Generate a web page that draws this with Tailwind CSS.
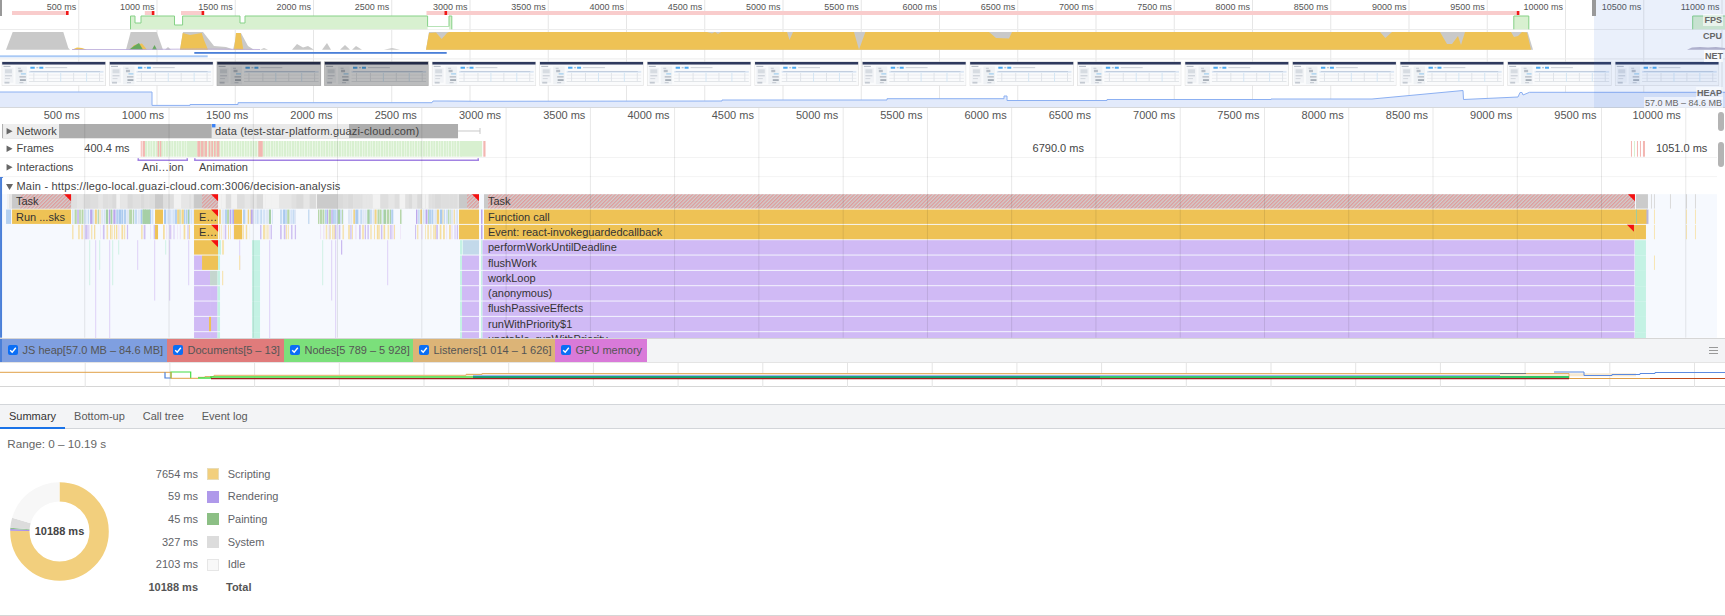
<!DOCTYPE html>
<html lang="en">
<head>
<meta charset="UTF-8">
<title>Performance</title>
<script src="https://cdn.jsdelivr.net/npm/@tailwindcss/browser@4"></script>
</head>
<body class="bg-white">
<div class="w-[1725px] h-[616px] overflow-hidden flex flex-col bg-white text-[11px] text-[#444] font-['Liberation_Sans',Arial,sans-serif]">

    <!-- overview -->
    <div class="relative h-[108px] shrink-0 overflow-hidden">
        <svg id="overview" class="absolute left-0 top-0" width="1725" height="108" viewBox="0 0 1725 108">
            <defs>
                <filter id="soft"><feGaussianBlur stdDeviation="0.35"/></filter>
                <symbol id="thumb" viewBox="0 0 105 24.6" width="104.5" height="24.6">
                    <rect x="0" y="0" width="105" height="24.6" fill="#dedede"/>
                    <rect x="0.7" y="0.6" width="103.6" height="23.4" fill="#fafbfc"/>
                    <rect x="0.7" y="0.6" width="103.6" height="2.6" fill="#2f3a5e"/>
                    <g filter="url(#soft)">
                        <rect x="2" y="4.5" width="7" height="1.2" fill="#b9bfc9"/>
                        <rect x="2" y="6.5" width="10" height="15" fill="#f1f3f6"/>
                        <rect x="3.5" y="8" width="7" height="4" fill="#d7dce2"/>
                        <rect x="3.5" y="14" width="7" height="1" fill="#c3c9d1"/>
                        <rect x="3.5" y="17" width="5" height="0.8" fill="#ccd1d8"/>
                        <rect x="3" y="20.5" width="5" height="1.8" fill="#c3c9d1"/>
                        <rect x="14" y="5" width="11.5" height="18" fill="#eff2f5"/>
                        <rect x="16.5" y="6.5" width="3" height="0.8" fill="#b9bfc9"/>
                        <rect x="17" y="8.5" width="4" height="2.4" fill="#b7bec7"/>
                        <rect x="19.5" y="12" width="5" height="1.2" fill="#9fcdee"/>
                        <rect x="18" y="15" width="6.5" height="1.2" fill="#aeb5be"/>
                        <rect x="18.5" y="18" width="6" height="1.6" fill="#9ca4ae"/>
                        <rect x="18" y="21" width="4" height="0.9" fill="#b9bfc9"/>
                        <rect x="29" y="5.4" width="4.4" height="2" fill="#4ba8f0"/>
                        <rect x="35" y="5.6" width="2" height="1.4" fill="#b9c4d2"/>
                        <rect x="38" y="5.4" width="4" height="2" fill="#4ba8f0"/>
                        <rect x="44" y="5.9" width="22" height="0.9" fill="#c6cbd2"/>
                        <rect x="27.5" y="9.6" width="75" height="1.8" fill="#dbe6f4"/>
                        <rect x="29" y="10" width="70" height="0.7" fill="#b7c4d6"/>
                        <rect x="27.5" y="13.4" width="75" height="0.7" fill="#e3e6ea"/>
                        <rect x="27.5" y="16.6" width="75" height="0.7" fill="#e3e6ea"/>
                        <rect x="27.5" y="19.8" width="75" height="0.7" fill="#d7dbe0"/>
                        <rect x="32" y="11.5" width="1" height="9" fill="#e0e4e9"/>
                        <rect x="46" y="11.5" width="1" height="9" fill="#e0e4e9"/>
                        <rect x="59" y="11.5" width="1" height="9" fill="#d4e6f4"/>
                        <rect x="72" y="11.5" width="1" height="9" fill="#e0e4e9"/>
                        <rect x="85" y="11.5" width="1" height="9" fill="#d4e6f4"/>
                        <rect x="98" y="11.5" width="1" height="9" fill="#e0e4e9"/>
                    </g>
                </symbol>
            </defs>
        </svg>
        <div class="relative flex h-[15px] items-center text-[9px] text-[#555]" id="overviewTicks"></div>
        <div class="absolute left-[1594.4px] top-0 w-[131px] h-[108px] bg-[#2f6fd8]/10"></div>
        <div class="absolute left-0 top-0 w-[2px] h-[16px] bg-[#999]"></div>
        <div class="absolute left-[1592px] top-0 w-[4px] h-[16px] bg-[#999]"></div>
        <span class="absolute right-[2px] top-[14px] px-[1px] text-[9px] leading-[12px] font-bold text-[#666] bg-white/60">FPS</span>
        <span class="absolute right-[2px] top-[30px] px-[1px] text-[9px] leading-[12px] font-bold text-[#666]">CPU</span>
        <span class="absolute right-[2px] top-[50px] pl-[1px] text-[9px] leading-[12px] font-bold text-[#666] bg-white/70">NET</span>
        <span class="absolute right-[2px] top-[87px] px-[1px] text-[9px] leading-[12px] font-bold text-[#666] bg-white/50">HEAP</span>
        <span class="absolute right-[2px] top-[97px] px-[1px] text-[9px] leading-[12px] text-[#666] bg-white/60">57.0 MB – 84.6 MB</span>
    </div>

    <!-- tracks + flame chart -->
    <div class="relative h-[229.7px] shrink-0 overflow-hidden">
        <svg id="tracks" class="absolute left-0 top-0" width="1725" height="229.7" viewBox="0 108 1725 229.7">
            <defs>
                <pattern id="hatch" width="2.6" height="2.6" patternUnits="userSpaceOnUse" patternTransform="rotate(45)">
                    <rect width="2.6" height="2.6" fill="#cfcfcf"/>
                    <rect width="1.3" height="2.6" fill="#e09a9a"/>
                </pattern>
            </defs>
        </svg>
        <div class="relative h-[13.5px] flex items-center text-[#555]" id="axisTicks"></div>

        <div class="relative mt-[2.5px] h-[14.5px] flex items-center">
            <span class="w-[215px] pl-[16.5px]">Network</span>
            <span class="tracking-[0.15px]">data (test-star-platform.guazi-cloud.com)</span>
        </div>
        <div class="relative h-[18.8px] flex items-center pt-[1.5px]">
            <span class="w-[84.3px] pl-[16.5px]">Frames</span>
            <span class="w-[948.3px]">400.4 ms</span>
            <span class="w-[623.4px]">6790.0 ms</span>
            <span>1051.0 ms</span>
        </div>
        <div class="relative h-[19.4px] flex items-center">
            <span class="w-[142px] pl-[16.5px]">Interactions</span>
            <span class="w-[57px]">Ani…ion</span>
            <span>Animation</span>
        </div>
        <div class="relative h-[17.5px] flex items-center pl-[16.5px] pt-[2.5px] tracking-[0.2px]">Main - https://lego-local.guazi-cloud.com:3006/decision-analysis</div>

        <div class="relative text-[#333] leading-[15.33px]">
            <div class="h-[15.33px] flex"><span class="w-[16px]"></span><span class="w-[183px]">Task</span><span class="w-[289px]"></span><span>Task</span></div>
            <div class="h-[15.33px] flex"><span class="w-[16px]"></span><span class="w-[183px]">Run ...sks</span><span class="w-[289px]">E…</span><span>Function call</span></div>
            <div class="h-[15.33px] flex"><span class="w-[199px]"></span><span class="w-[289px]">E…</span><span>Event: react-invokeguardedcallback</span></div>
            <div class="h-[15.33px] pl-[488px]">performWorkUntilDeadline</div>
            <div class="h-[15.33px] pl-[488px]">flushWork</div>
            <div class="h-[15.33px] pl-[488px]">workLoop</div>
            <div class="h-[15.33px] pl-[488px]">(anonymous)</div>
            <div class="h-[15.33px] pl-[488px]">flushPassiveEffects</div>
            <div class="h-[15.33px] pl-[488px]">runWithPriority$1</div>
            <div class="h-[15.33px] pl-[488px]">unstable_runWithPriority</div>
        </div>

        <div class="absolute right-[1px] top-[3.7px] w-[6.4px] h-[19px] rounded-[3px] bg-[#b4b4b4]"></div>
        <div class="absolute right-[1px] top-[34px] w-[6.4px] h-[24.7px] rounded-[3px] bg-[#b4b4b4]"></div>
    </div>

    <!-- memory counters -->
    <div class="h-[24px] shrink-0 flex items-stretch bg-[#f3f4f6] border-t border-[#d6d6d6] text-[#555] text-[11px]">
        <div class="w-[2px] bg-[#4a7fd8]"></div>
        <div class="w-[165px] bg-[#7f9fe0] flex items-center gap-[5px] pl-[5.5px]">
            <span class="w-[10px] h-[10px] rounded-[2px] bg-[#0b6ef5] flex items-center justify-center"><svg width="8" height="8" viewBox="0 0 8 8"><path d="M1.2 4.2 L3.2 6.2 L6.8 1.8" fill="none" stroke="#fff" stroke-width="1.4"/></svg></span>
            <span>JS heap[57.0 MB – 84.6 MB]</span>
        </div>
        <div class="w-[117px] bg-[#e07b7b] flex items-center gap-[5px] pl-[5.5px]">
            <span class="w-[10px] h-[10px] rounded-[2px] bg-[#0b6ef5] flex items-center justify-center"><svg width="8" height="8" viewBox="0 0 8 8"><path d="M1.2 4.2 L3.2 6.2 L6.8 1.8" fill="none" stroke="#fff" stroke-width="1.4"/></svg></span>
            <span>Documents[5 – 13]</span>
        </div>
        <div class="w-[129px] bg-[#7be07b] flex items-center gap-[5px] pl-[5.5px]">
            <span class="w-[10px] h-[10px] rounded-[2px] bg-[#0b6ef5] flex items-center justify-center"><svg width="8" height="8" viewBox="0 0 8 8"><path d="M1.2 4.2 L3.2 6.2 L6.8 1.8" fill="none" stroke="#fff" stroke-width="1.4"/></svg></span>
            <span>Nodes[5 789 – 5 928]</span>
        </div>
        <div class="w-[142px] bg-[#dcb477] flex items-center gap-[5px] pl-[5.5px]">
            <span class="w-[10px] h-[10px] rounded-[2px] bg-[#0b6ef5] flex items-center justify-center"><svg width="8" height="8" viewBox="0 0 8 8"><path d="M1.2 4.2 L3.2 6.2 L6.8 1.8" fill="none" stroke="#fff" stroke-width="1.4"/></svg></span>
            <span>Listeners[1 014 – 1 626]</span>
        </div>
        <div class="w-[92px] bg-[#d97ad9] flex items-center gap-[5px] pl-[5.5px]">
            <span class="w-[10px] h-[10px] rounded-[2px] bg-[#0b6ef5] flex items-center justify-center"><svg width="8" height="8" viewBox="0 0 8 8"><path d="M1.2 4.2 L3.2 6.2 L6.8 1.8" fill="none" stroke="#fff" stroke-width="1.4"/></svg></span>
            <span>GPU memory</span>
        </div>
        <div class="flex-1 flex items-center justify-end pr-[7px]">
            <div class="flex flex-col gap-[2px]"><div class="w-[9px] h-[1px] bg-[#999]"></div><div class="w-[9px] h-[1px] bg-[#999]"></div><div class="w-[9px] h-[1px] bg-[#999]"></div></div>
        </div>
    </div>

    <!-- memory graph -->
    <div class="h-[25px] shrink-0 border-y border-[#d6d6d6] border-t-[#e4e4e4] box-border">
        <svg id="memory" class="block" width="1725" height="24" viewBox="0 362 1725 24"></svg>
    </div>
    <div class="h-[17.5px] shrink-0"></div>

    <!-- details -->
    <div class="h-[25px] shrink-0 flex items-stretch bg-[#f3f4f6] border-y border-[#d3d6da] text-[#5a5a5a]">
        <div class="px-[9px] flex items-center text-[#333] border-b-2 border-[#1a73e8] -mb-[1px]">Summary</div>
        <div class="px-[9px] flex items-center">Bottom-up</div>
        <div class="px-[9px] flex items-center">Call tree</div>
        <div class="px-[9px] flex items-center">Event log</div>
    </div>
    <div class="flex-1 relative border-b border-[#d6d6d6] text-[#5f6368]">
        <div class="h-[33.5px] flex items-center pl-[7.3px] pb-[4px] text-[11.7px] text-[#666]">Range: 0 – 10.19 s</div>
        <div class="flex">
            <div class="w-[118px] pl-[9.7px] pt-[19.4px]">
                <svg width="99" height="99" viewBox="0 0 99 99">
                    <g id="donut" fill="none" stroke-width="19.3" transform="rotate(-90 49.5 49.5)"></g>
                    <text x="49.5" y="53.3" text-anchor="middle" font-size="11" font-weight="700" fill="#444">10188 ms</text>
                </svg>
            </div>
            <div class="flex flex-col">
                <div class="h-[22.67px] flex items-center"><span class="w-[80px] text-right">7654 ms</span><span class="ml-[9px] w-[12px] h-[12px] bg-[#f2cf7d] border border-[#e8dcb8]"></span><span class="ml-[8.7px]">Scripting</span></div>
                <div class="h-[22.67px] flex items-center"><span class="w-[80px] text-right">59 ms</span><span class="ml-[9px] w-[12px] h-[12px] bg-[#af99ea]"></span><span class="ml-[8.7px]">Rendering</span></div>
                <div class="h-[22.67px] flex items-center"><span class="w-[80px] text-right">45 ms</span><span class="ml-[9px] w-[12px] h-[12px] bg-[#8cbf85]"></span><span class="ml-[8.7px]">Painting</span></div>
                <div class="h-[22.67px] flex items-center"><span class="w-[80px] text-right">327 ms</span><span class="ml-[9px] w-[12px] h-[12px] bg-[#dcdcdc]"></span><span class="ml-[8.7px]">System</span></div>
                <div class="h-[22.67px] flex items-center"><span class="w-[80px] text-right">2103 ms</span><span class="ml-[9px] w-[12px] h-[12px] bg-[#f8f8f8] border border-[#e6e6e6]"></span><span class="ml-[8.7px]">Idle</span></div>
                <div class="h-[22.67px] flex items-center font-bold text-[#555]"><span class="w-[80px] text-right">10188 ms</span><span class="ml-[28px]">Total</span></div>
            </div>
        </div>
    </div>
</div>

<script>
    const NS = 'http://www.w3.org/2000/svg';
    function el(parent, tag, attrs) {
        const node = document.createElementNS(NS, tag);
        for (const k in attrs) node.setAttribute(k, attrs[k]);
        parent.appendChild(node);
        return node;
    }
    function bar(parent, x, y, w, h, fill) { return el(parent, 'rect', { x, y, width: w, height: h, fill }); }
    function poly(parent, points, fill) { return el(parent, 'polygon', { points, fill }); }
    function line(parent, points, stroke, width) {
        return el(parent, 'polyline', { points, stroke, 'stroke-width': width || 1, fill: 'none' });
    }

    // fixed sequence so the stripes stay put between runs
    let seed = 7;
    function rnd() { seed = (seed * 16807) % 2147483647; return seed / 2147483647; }

    // tick labels
    const ovTicks = document.getElementById('overviewTicks');
    for (let i = 1; i <= 22; i++) {
        const d = document.createElement('div');
        d.style.width = '78.25px';
        d.style.flex = 'none';
        d.style.textAlign = 'right';
        d.style.paddingRight = '2px';
        d.style.whiteSpace = 'nowrap';
        d.textContent = (i * 500) + ' ms';
        ovTicks.appendChild(d);
    }
    const axTicks = document.getElementById('axisTicks');
    for (let i = 1; i <= 20; i++) {
        const d = document.createElement('div');
        d.style.width = '84.27px';
        d.style.flex = 'none';
        d.style.textAlign = 'right';
        d.style.paddingRight = '4.5px';
        d.style.whiteSpace = 'nowrap';
        d.textContent = (i * 500) + ' ms';
        axTicks.appendChild(d);
    }

    // --- overview ---
    const ov = document.getElementById('overview');
    for (let i = 1; i <= 22; i++) bar(ov, i * 78.25, 0, 1, 108, '#e6e6e6');
    bar(ov, 0, 29, 1725, 1, '#ececec');
    bar(ov, 0, 58.4, 1725, 1, '#ececec');

    // FPS
    [[12, 66.4], [144.8, 153.3], [181, 203], [426.5, 1517.8]].forEach(s => bar(ov, s[0], 11, s[1] - s[0], 4, '#f9cccc'));
    [66, 151.8, 201.6, 444.5, 1516.8].forEach(x => bar(ov, x, 11, 2.6, 4, '#f01818'));
    const fps = (x1, x2) => {
        poly(ov, `${x1},29.3 ${x1},16 135,16 135,23 141,23 141,16 174.5,16 174.5,25 182.6,25 182.6,16 240,16 240,23 245,23 245,16 427.6,16 427.6,26.5 449,26.5 449,16 451.8,16 451.8,29.3`, '#d8f0d0');
        line(ov, `${x1},29.3 ${x1},16 135,16 135,23 141,23 141,16 174.5,16 174.5,25 182.6,25 182.6,16 240,16 240,23 245,23 245,16 427.6,16 427.6,26.5 449,26.5 449,16 451.8,16 451.8,29.3`, '#85d186');
    };
    fps(130.5);
    bar(ov, 427.6, 26.6, 21.4, 2.8, '#fff');
    bar(ov, 1513.8, 16, 15, 13.3, '#d8f0d0');
    line(ov, '1513.8,29.3 1513.8,16 1528.8,16 1528.8,29.3', '#85d186');
    bar(ov, 1692.7, 16, 33, 13.3, '#d8f0d0');
    line(ov, '1692.7,29.3 1692.7,16 1725,16', '#85d186');

    // CPU
    const G = '#c9c9c9', Y = '#eec255', GR = '#66a95d', P = '#a78be0';
    poly(ov, '6,49.7 12.7,32 63.3,32 68.3,48 70,49.7', G);
    poly(ov, '126,49.7 130.7,32 156.7,32 163,49.7', G);
    poly(ov, '180,49.7 183,32 203,32 214,46 226,47 234,49.7', G);
    poly(ov, '233,49.7 237,33 241,33 248,46 254,49.7', G);
    poly(ov, '180,49.7 182.7,33 190,35 201.7,33 204,40 208,49.7', Y);
    poly(ov, '234,49.7 236,33 240.7,33 243.3,49.7', Y);
    poly(ov, '72,49.7 77,47.5 82,48 87,49.7', Y);
    poly(ov, '130,49.7 134,45 142,43.5 147,49.7', Y);
    poly(ov, '129,49.7 134,46 139,43 143,49.7', GR);
    poly(ov, '152,49.7 154.5,45 157,49.7', GR);
    poly(ov, '165,49.7 168,47 171,49.7', G);
    poly(ov, '260,49.7 264,48 268,49.7', G);
    poly(ov, '292,49.7 297,44 303,47.5 308,46 314,49.7', G);
    poly(ov, '322,49.7 327,43 331,49.7', G);
    poly(ov, '340,49.7 345,45 350,49.7', G);
    poly(ov, '352,49.7 356,46 362,49.7', G);
    poly(ov, '384,49.7 392,48 400,49.7', G);
    line(ov, '72,49.5 130,49.5 200,49 260,49.5', '#b7a7d8', 0.8);
    poly(ov, '426,49.7 429,32 1527.7,32 1533,49.7', G);
    poly(ov, '426,49.7 429,33 436,32.5 441.7,39 447,33 449,32 707,32 712,33.5 715,32 718,34 721,32 787,32 789.5,40 793,32 854,32 859,49.7 865.4,32 989,32 996,38 1009,38.5 1012,32 1380,32 1385.4,38 1392,32 1440,32 1447,44 1452,44 1458,36 1461,45 1465,32 1511,32 1514,37 1518,36 1522,32 1527,32.5 1531,49.7', Y);
    poly(ov, '1687,49.7 1692,47.5 1700,47 1708,47.5 1716,47 1725,48 1725,49.7', '#bdb8cc');

    // NET
    bar(ov, 194.3, 52, 252.4, 1.8, '#4a7fd8');
    bar(ov, 0, 55.3, 207.7, 2, '#a9c9f5');

    // screenshots
    for (let i = 0; i < 16; i++) {
        const x = 1.5 + i * 107.55;
        el(ov, 'use', { href: '#thumb', x, y: 61.3 });
        if (i === 2 || i === 3) bar(ov, x, 61.3, 104.5, 24.6, 'rgba(0,0,0,.25)');
    }

    // heap
    const heap = '0,92 152,92 152,105.4 190,105.4 190,104.5 238,104.5 238,102.7 432,102.7 433,101 447,101 477,101.3 722,101 722,100 887,100 887,98.7 1004,98.7 1004,96 1007,96 1007,100.5 1107,100.5 1107,99.5 1271,99.5 1271,99 1372,99 1463,90.5 1463.5,99.5 1518,97 1520,92.5 1522,92.5 1523,95 1529.5,92.3 1725,92.3';
    poly(ov, heap + ' 1725,108 0,108', '#e2eafb');
    line(ov, heap, '#8cb0f2', 1);
    bar(ov, 0, 107.2, 1725, 0.8, '#d4d4d4');

    // --- tracks ---
    const tr = document.getElementById('tracks');

    // network
    bar(tr, 2, 124, 456, 14.3, '#adadad');
    bar(tr, 3, 124, 56, 14.3, '#eeeeee');
    bar(tr, 211.6, 124, 137.4, 14.3, '#e9e9e9');
    bar(tr, 212, 124, 3.4, 3.4, '#3b82f6');
    line(tr, '458,131 480,131', '#c8c8c8');
    line(tr, '480,128 480,134', '#c8c8c8');

    // frames
    for (let x = 145; x < 461; x += 2.62) bar(tr, x, 141, 2.2, 15.7, '#d8f0d0');
    bar(tr, 187.7, 141, 9, 15.7, '#d8f0d0');
    bar(tr, 460.7, 141, 21.5, 15.7, '#d8f0d0');
    [[140.7, 1], [142.5, 2.4], [157.5, 1.6], [160, 1.2], [197.3, 3], [201, 2.5], [204.5, 2.5],
     [208.7, 1.7], [211.3, 1.7], [214, 1.7], [216.7, 2.6], [258.3, 4.4], [483.3, 2.2],
     [1631, 1], [1637, 1], [1640, 1], [1643, 2]].forEach(r => bar(tr, r[0], 141, r[1], 15.7, '#f3b6b1'));
    bar(tr, 1634, 141, 1, 15.7, '#d8f0d0');
    bar(tr, 0, 157, 1717, 0.7, '#eeeeee');
    bar(tr, 0, 176.4, 1717, 0.7, '#eeeeee');

    // interactions
    line(tr, '138.2,158.3 138.2,160.3 187.2,160.3 187.2,158.3', '#a283e2', 1.5);
    line(tr, '194.8,158.3 194.8,160.3 478.2,160.3 478.2,158.3', '#a283e2', 1.5);

    // twisties
    const TW = '#666';
    poly(tr, '6.5,128 12.5,131.2 6.5,134.5', TW);
    poly(tr, '6.5,145.4 12.5,148.7 6.5,152', TW);
    poly(tr, '6.5,164 12.5,167.3 6.5,170.6', TW);
    poly(tr, '6,184 13,184 9.5,190', TW);

    // flame chart
    const R0 = 194.2, P0 = 15.33, RH = 14.4;
    const ry = r => R0 + r * P0;
    bar(tr, 2, R0, 1715, 143.6, '#f6f9fe');

    const stripes = (row, from, to, colors, minW, maxW, gap) => {
        let x = from;
        while (x < to) {
            const w = Math.min(minW + rnd() * (maxW - minW), to - x);
            bar(tr, x, ry(row), w, RH, colors[Math.floor(rnd() * colors.length)]);
            x += w + rnd() * gap;
        }
    };

    // task row
    [[7, 194], [218, 459]].forEach(s => {
        bar(tr, s[0], ry(0), s[1] - s[0], RH, '#e4e4e4');
        stripes(0, s[0], s[1], ['#dedede', '#e0e0e0', '#dadada', '#e6e6e6', '#f2f2f2'], 2, 8, 0.5);
    });
    [[155, 163], [317, 337], [1636, 1648]].forEach(s => bar(tr, s[0], ry(0), s[1] - s[0], RH, '#cbcbcb'));
    [1651, 1654, 1670, 1686, 1695].forEach(x => bar(tr, x, ry(0), 1, RH, '#dadada'));

    // function row
    const mix = ['#a9c9ee', '#b4d0f0', '#a6cfa6', '#bba8ec', '#c6dbf2', '#b7d6a9', '#dfe7f5', '#d4e3f7', '#f0d488'];
    bar(tr, 6, ry(1), 5, RH, '#b4d0f0');
    [[72, 154], [164, 194], [219, 234], [243, 273], [280, 296], [308, 310], [318, 344], [348, 394], [400, 402], [416, 458]]
        .forEach(s => stripes(1, s[0], s[1], mix, 0.7, 2.6, 1));
    bar(tr, 143, ry(1), 7, RH, '#a6cfa6');
    bar(tr, 155, ry(1), 8, RH, Y);
    bar(tr, 234, ry(1), 8, RH, Y);

    // event row
    const ev = ['#f5dd9e', '#f5e4b4', '#cfc1f2', '#efe6f8'];
    [[72, 73.5], [78, 96], [100, 130], [141, 146], [150, 155], [163, 190], [219, 250], [260, 272], [280, 296], [320, 345], [348, 395], [400, 402], [415, 458]]
        .forEach(s => stripes(2, s[0], s[1], ev, 0.8, 1.8, 2.8));
    bar(tr, 155, ry(2), 3, RH, Y);
    bar(tr, 234, ry(2), 8, RH, Y);

    // thin tall calls under the stripes
    const PL = '#e2d8f8', TL = '#d6f3ea', YL = '#f7e5b4';
    [[89, TL, 3, 5], [95, PL, 3, 9], [99, TL, 3, 4], [109, PL, 3, 9], [112, TL, 3, 5], [118, TL, 3, 3], [137, PL, 3, 4],
     [154, PL, 3, 6], [165, TL, 3, 3], [169, PL, 3, 6], [188, PL, 3, 5], [239, PL, 3, 4], [269, PL, 3, 9], [322, TL, 3, 5],
     [331, PL, 3, 6], [335, PL, 3, 9], [341, '#c9b9f0', 3, 3], [387, PL, 3, 5], [222, YL, 5, 5], [239, YL, 4, 4]]
        .forEach(c => bar(tr, c[0], ry(c[2]), 1.2, (c[3] - c[2]) * P0 + RH, c[1]));
    bar(tr, 222, ry(3), 2, RH, YL);
    [[1654, 1], [1654, 2], [1654, 4], [1686, 1], [1686, 2], [1695, 1], [1695, 2]].forEach(c => bar(tr, c[0], ry(c[1]), 1, RH, YL));

    // teal column
    for (let r = 3; r <= 9; r++) bar(tr, 252, ry(r), 8, RH + 1, '#c4f2e4');

    const PU = '#d0baf5', TE = '#c4f2e4', HT = 'url(#hatch)';
    const tri = (x2, r) => poly(tr, `${x2 - 7},${ry(r)} ${x2},${ry(r)} ${x2},${ry(r) + 7}`, '#f51010');

    // first long task
    bar(tr, 12, ry(0), 8, RH, '#c9c9c9');
    bar(tr, 20, ry(0), 51, RH, HT);
    tri(71, 0);
    bar(tr, 12, ry(1), 59, RH, Y);

    // block around 200 px
    bar(tr, 194, ry(0), 8, RH, '#c9c9c9');
    bar(tr, 202, ry(0), 16, RH, HT);
    tri(218, 0);
    [1, 2, 3].forEach(r => { bar(tr, 194, ry(r), 24, RH, '#eec255'); tri(218, r); });
    bar(tr, 218, ry(3), 3, RH, TE);
    bar(tr, 194, ry(4), 8, RH, PU);
    bar(tr, 202, ry(4), 16, RH, Y);
    bar(tr, 218, ry(4), 2, RH, TE);
    for (let r = 5; r <= 9; r++) {
        bar(tr, 194, ry(r), 16, RH, PU);
        bar(tr, 210, ry(r), 7.5, RH, r === 5 ? '#c5d6cf' : PU);
        bar(tr, 217.5, ry(r), 2.5, RH, TE);
    }
    bar(tr, 209, ry(8), 2, RH, '#eec255');

    // block before the big task
    bar(tr, 459, ry(0), 8, RH, '#c9c9c9');
    bar(tr, 467, ry(0), 12, RH, HT);
    tri(479, 0);
    bar(tr, 459, ry(1), 20, RH, Y);
    bar(tr, 459, ry(2), 20, RH, Y);
    bar(tr, 460, ry(3), 2.5, RH, TE);
    bar(tr, 463, ry(3), 16, RH, '#c3d9ea');
    for (let r = 4; r <= 9; r++) {
        bar(tr, 460, ry(r), 2, RH, TE);
        bar(tr, 462, ry(r), 17, RH, PU);
    }
    for (let r = 3; r <= 9; r++) { bar(tr, 481, ry(r), 1.5, RH, TE); bar(tr, 482.5, ry(r), 1.5, RH, PU); }
    bar(tr, 481, ry(1), 1.5, RH, '#bba8ec');
    bar(tr, 481, ry(2), 1.5, RH, '#bba8ec');

    // the big task
    bar(tr, 484, ry(0), 4, RH, '#c9c9c9');
    bar(tr, 488, ry(0), 1147, RH, HT);
    tri(1635, 0);
    bar(tr, 484, ry(1), 1152, RH, Y);
    bar(tr, 484, ry(2), 1152, RH, Y);
    tri(1634, 2);
    for (let r = 3; r <= 9; r++) {
        bar(tr, 484, ry(r), 1150.5, RH, PU);
        bar(tr, 1635, ry(r), 11, RH + 1, TE);
    }
    bar(tr, 1636, ry(1), 11, RH, Y);
    bar(tr, 1636, ry(2), 10, RH, Y);
    bar(tr, 1636, ry(1), 1, RH, '#9fcb9f');
    bar(tr, 1646.5, ry(1), 2, RH, '#b9b6d8');

    // left selection bar of the Main track
    bar(tr, 0, 177, 2, 160.7, '#4a7fd8');
    bar(tr, 0, 177, 3, 0.9, '#4a7fd8');

    // grid lines over everything in the tracks
    for (let i = 1; i <= 20; i++) bar(tr, i * 84.27, 108, 0.9, 229.7, 'rgba(0,0,0,.1)');

    // --- memory graph ---
    const mem = document.getElementById('memory');
    for (let i = 1; i <= 20; i++) bar(mem, i * 84.7, 362, 1, 24, '#e4e4e4');
    bar(mem, 466, 372.3, 1170, 3, '#f6e9d2');
    bar(mem, 214, 374.3, 252, 2, '#f0f7c4');
    line(mem, '0,371.3 171,371.3', '#e0a048');
    line(mem, '165,371.3 165,377 171,377', '#4a7fd8', 1.2);
    line(mem, '171,377.3 171,371 190.7,371 190.7,377.3', '#44dd44', 1.2);
    line(mem, '171,371 171,377.3 198,377.3', '#e0a048', 1);
    line(mem, '198,376.3 205,376.3 205,375.5 214,375.5 214,374.3 466,374.3 466,373.5 482,373.5 482,372.5 1569,372.5 1569,377.3', '#e3b06a', 1);
    line(mem, '198,377 211,377 211,376 473,376', '#44dd44', 1.6);
    line(mem, '473,376 1100,376', '#12a070', 1.8);
    line(mem, '1100,376 1569,376', '#2fc864', 1.8);
    line(mem, '473,374.6 1500,374.6', '#8cb0f2', 1);
    line(mem, '1500,372.5 1526,372.5', '#7a7a7a', 1);
    line(mem, '1554,371 1584,371 1584,374.5 1612,374.5 1612,373.5 1640,373.5 1640,372.5 1655,372.5 1655,371.5 1725,371.5', '#5b8ae0', 1);
    line(mem, '211,377.6 1569,377.6', '#a12020', 1.2);
    line(mem, '1569,377.5 1650,377.5', '#e0a048', 1);
    line(mem, '1650,377.5 1725,377.5', '#c04a1a', 1.2);

    // --- donut ---
    const donut = document.getElementById('donut');
    const c = 2 * Math.PI * 39.65;
    let off = 0;
    [[7654, '#f2cf7d'], [59, '#a98ee8'], [45, '#8cc08c'], [327, '#dcdcdc'], [2103, '#f7f7f7']].forEach(s => {
        const len = s[0] / 10188 * c;
        el(donut, 'circle', { cx: 49.5, cy: 49.5, r: 39.65, stroke: s[1], 'stroke-dasharray': `${len} ${c - len}`, 'stroke-dashoffset': -off });
        off += len;
    });
</script>
</body>
</html>
